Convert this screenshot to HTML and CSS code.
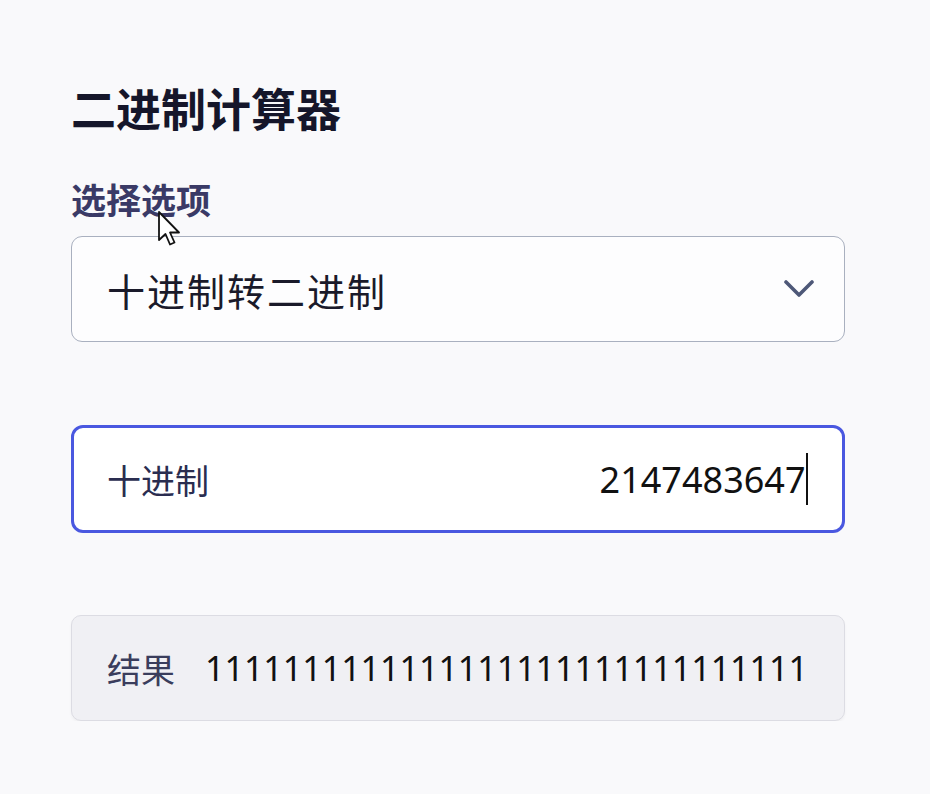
FILE: index.html
```html
<!DOCTYPE html>
<html lang="zh-CN">
<head>
<meta charset="utf-8">
<title>二进制计算器</title>
<link rel="stylesheet" href="styles.css">
</head>
<body>
<main class="page">
  <h1 class="title">二进制计算器</h1>
  <div class="label">选择选项</div>
  <div class="select">
    <span class="select-text">十进制转二进制</span>
    <svg class="chevron" width="30" height="18" viewBox="0 0 30 18"><path d="M2 2 L15 15 L28 2" fill="none" stroke="#4e5878" stroke-width="3.6" stroke-linecap="round" stroke-linejoin="round"/></svg>
  </div>
  <div class="input">
    <span class="input-label">十进制</span>
    <span class="input-value">2147483647<span class="caret"></span></span>
  </div>
  <div class="result">
    <span class="result-label">结果</span>
    <span class="result-value">1111111111111111111111111111111</span>
  </div>
  <svg class="pointer" width="28" height="40" viewBox="0 0 28 40"><path d="M2 2 L2 30 L8.5 24 L13 34.5 L17.5 32.5 L13 22.5 L22 22.5 Z" fill="#fff" stroke="#111" stroke-width="1.8" stroke-linejoin="round"/></svg>
</main>
</body>
</html>
```

FILE: styles.css
```css
html, body {
  margin: 0;
  padding: 0;
  background: #f9f9fb;
}
body {
  font-family: "Noto Sans", "Noto Sans CJK SC", sans-serif;
}
.page {
  position: relative;
  width: 774px;
  padding: 84px 0 0 71px;
  display: flex;
  flex-direction: column;
}
.title {
  margin: 0;
  font-size: 45px;
  line-height: 52px;
  font-weight: 700;
  color: #15162a;
}
.label {
  margin-top: 45px;
  font-size: 35px;
  line-height: 40px;
  font-weight: 700;
  color: #3a3a66;
}
.select {
  margin-top: 15px;
  box-sizing: border-box;
  height: 106px;
  border: 1.5px solid #a9b0bf;
  border-radius: 11px;
  background: #fdfdfe;
  display: flex;
  align-items: center;
  justify-content: space-between;
  padding: 0 30px 0 35px;
}
.select-text {
  font-size: 38px;
  color: #1a1a2a;
  letter-spacing: 2px;
}
.chevron {
  display: block;
}
.input {
  margin-top: 83px;
  box-sizing: border-box;
  height: 108px;
  border: 3px solid #4a58e0;
  border-radius: 12px;
  background: #ffffff;
  display: flex;
  align-items: center;
  justify-content: space-between;
  padding: 0 34px 0 33px;
}
.input-label {
  font-size: 34px;
  color: #2a2d50;
}
.input-value {
  font-size: 36px;
  color: #111;
  display: flex;
  align-items: center;
}
.caret {
  display: inline-block;
  width: 2.5px;
  height: 52px;
  background: #111;
}
.result {
  margin-top: 82px;
  box-sizing: border-box;
  height: 106px;
  border: 1.5px solid #dcdce3;
  border-radius: 10px;
  background: #f0f0f4;
  box-shadow: 0 2px 3px rgba(0,0,0,0.04);
  display: flex;
  align-items: center;
  gap: 30px;
  padding: 0 0 0 35px;
}
.result-label {
  font-size: 34px;
  color: #3a3d5c;
}
.result-value {
  font-size: 34px;
  color: #111;
}
.pointer {
  position: absolute;
  left: 157px;
  top: 210px;
}
```
